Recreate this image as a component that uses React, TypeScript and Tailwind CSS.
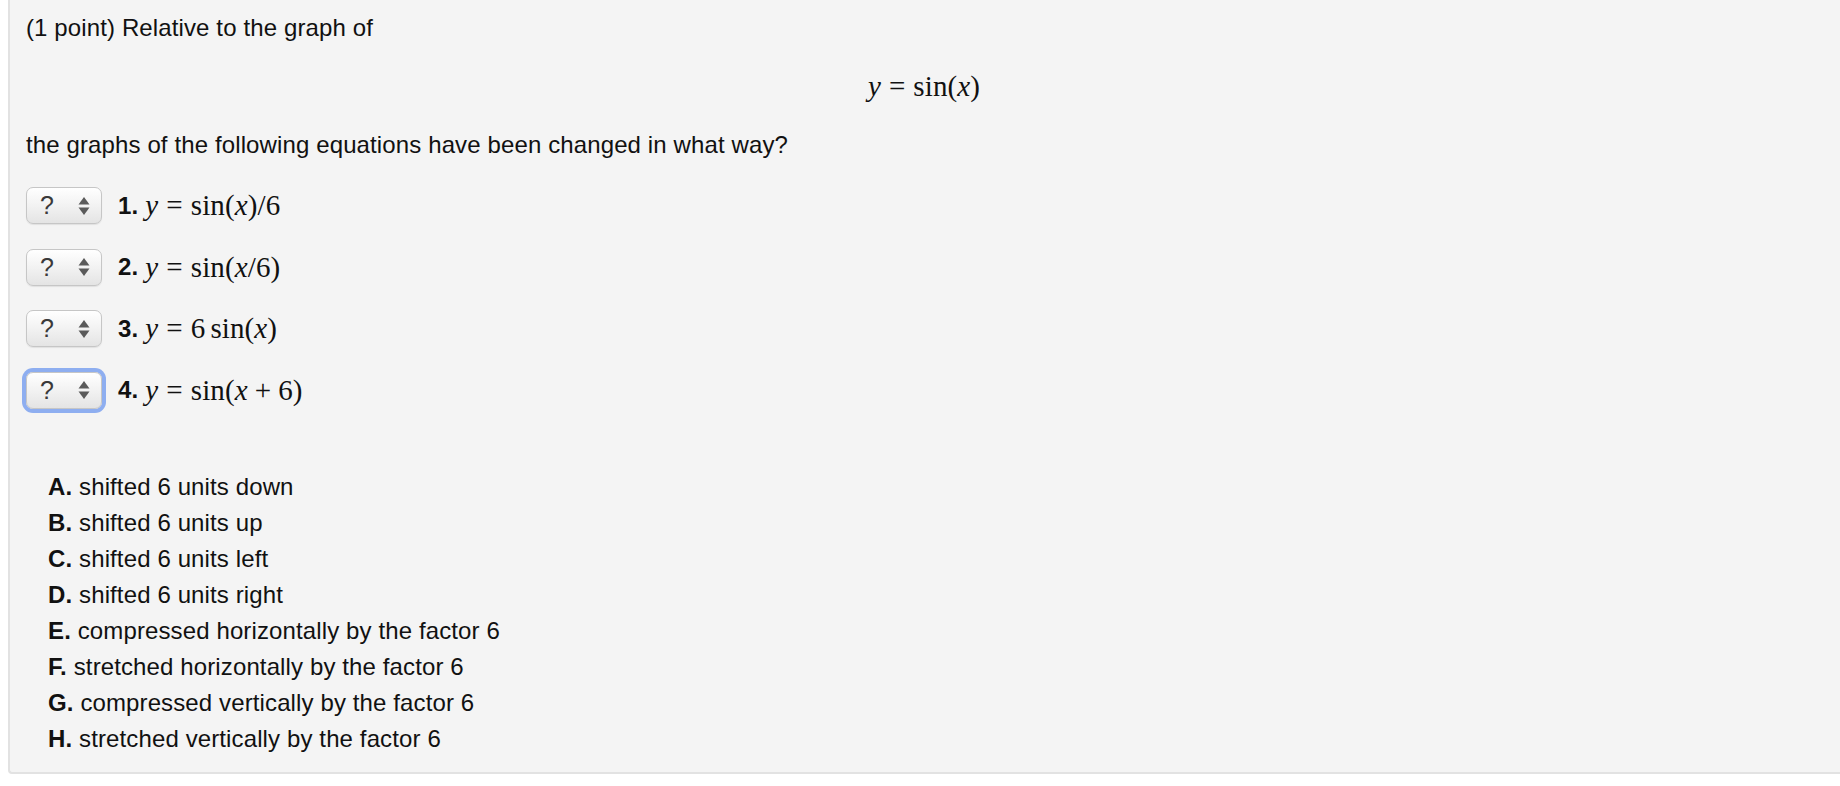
import React from "react";

const sans = { fontFamily: '"Liberation Sans", Arial, sans-serif' };

function Math({ children }: { children: React.ReactNode }) {
  return (
    <span className="text-[29px] leading-none text-[#111]" style={{ fontFamily: '"Liberation Serif", "Times New Roman", serif' }}>
      {children}
    </span>
  );
}

const I = ({ c }: { c: string }) => <span className="italic">{c}</span>;
const Eq = () => <span className="mx-[8px]">=</span>;

function Select({ focused }: { focused?: boolean }) {
  return (
    <div
      className={
        "flex h-[37px] w-[76px] items-center justify-between rounded-[7px] border border-[#c6c6c6] bg-gradient-to-b from-[#ffffff] via-[#f2f2f2] to-[#e4e4e4] pl-[13px] pr-[11px] " +
        (focused ? "shadow-[0_0_0_4px_#8eaef0]" : "shadow-[0_1px_1px_rgba(0,0,0,0.08)]")
      }
    >
      <span className="text-[25px] leading-none text-[#3a3a3a]" style={sans}>?</span>
      <svg width="12" height="20" viewBox="0 0 12 20">
        <polygon points="6,1 11.5,8.5 0.5,8.5" fill="#5a5a5a" />
        <polygon points="6,19 11.5,11.5 0.5,11.5" fill="#5a5a5a" />
      </svg>
    </div>
  );
}

function Row({ n, focused, children }: { n: number; focused?: boolean; children: React.ReactNode }) {
  return (
    <div className="flex h-[37px] items-center">
      <Select focused={focused} />
      <span className="ml-[16px] mr-[7px] text-[24px] font-bold text-[#111]" style={sans}>
        {n}.
      </span>
      <Math>{children}</Math>
    </div>
  );
}

const options: [string, string][] = [
  ["A.", "shifted 6 units down"],
  ["B.", "shifted 6 units up"],
  ["C.", "shifted 6 units left"],
  ["D.", "shifted 6 units right"],
  ["E.", "compressed horizontally by the factor 6"],
  ["F.", "stretched horizontally by the factor 6"],
  ["G.", "compressed vertically by the factor 6"],
  ["H.", "stretched vertically by the factor 6"],
];

export default function App() {
  return (
    <div className="min-h-[786px] w-[1840px] bg-white" style={sans}>
      <div className="ml-[8px] rounded-bl-[4px] border-b-2 border-l-2 border-[#e2e2e2] bg-[#f4f4f4] pb-[15px] pl-[16px] pt-[13px] text-[24px] tracking-[0.12px] text-[#111]">
        <div className="h-[30px] leading-[30px]">(1 point) Relative to the graph of</div>
        <div className="mt-[28px] flex h-[30px] items-center justify-center pr-[18px]">
          <Math>
            <I c="y" />
            <Eq />
            sin(
            <I c="x" />)
          </Math>
        </div>
        <div className="mt-[29px] h-[30px] leading-[30px]">the graphs of the following equations have been changed in what way?</div>
        <div className="mt-[27px] flex flex-col gap-[24.5px]">
          <Row n={1}>
            <I c="y" />
            <Eq />
            sin(
            <I c="x" />
            )/6
          </Row>
          <Row n={2}>
            <I c="y" />
            <Eq />
            sin(
            <I c="x" />
            /6)
          </Row>
          <Row n={3}>
            <I c="y" />
            <Eq />
            6<span className="ml-[5px]">sin(</span>
            <I c="x" />)
          </Row>
          <Row n={4} focused>
            <I c="y" />
            <Eq />
            sin(
            <I c="x" />
            <span className="mx-[7px]">+</span>6)
          </Row>
        </div>
        <div className="ml-[22px] mt-[60px] flex flex-col">
          {options.map(([k, v]) => (
            <div key={k} className="h-[36.1px] leading-[36.1px]">
              <span className="font-bold">{k}</span> {v}
            </div>
          ))}
        </div>
      </div>
    </div>
  );
}
